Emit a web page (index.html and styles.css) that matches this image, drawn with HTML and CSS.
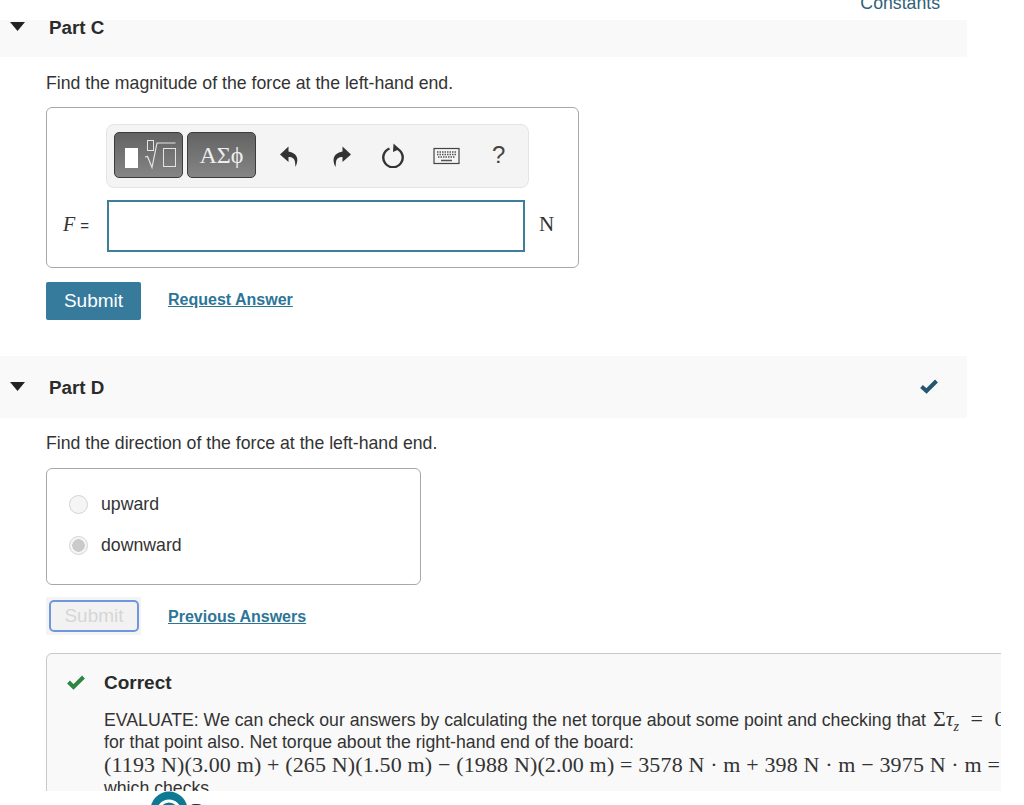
FILE: index.html
```html
<!DOCTYPE html>
<html lang="en">
<head>
<meta charset="utf-8">
<title>Part C and Part D</title>
<link rel="stylesheet" href="styles.css">
</head>
<body>
<div class="viewport">
  <div class="scroller">
    <div class="constants-row"><a class="constants">Constants</a></div>

    <div class="part-head head-c">
      <svg class="caret" width="15" height="9" viewBox="0 0 15 9"><path d="M0 0H15L7.500 9Z"/></svg>
      <h2 class="part-title title-c">Part C</h2>
    </div>
    <div class="part-body">
      <p class="prompt prompt-c">Find the magnitude of the force at the left-hand end.</p>
      <div class="answer-box">
        <div class="toolbar">
          <button class="tool-btn tool-template" aria-label="Templates">
            <svg width="67" height="44" viewBox="0 0 67 44">
              <rect x="10" y="15" width="13" height="20" fill="#fff"/>
              <rect x="32.500" y="7.500" width="6" height="10" fill="none" stroke="#e4e4e4"/>
              <path d="M30 24l2.500-.5 4.500 11 5-24.500H60.500" fill="none" stroke="#e4e4e4" stroke-width="1.200"/>
              <rect x="48.500" y="15.500" width="12" height="18" fill="none" stroke="#e4e4e4"/>
            </svg>
          </button>
          <button class="tool-btn tool-greek">ΑΣϕ</button>
          <span class="tool-icons">
            <svg class="icon-undo" width="20" height="23" viewBox="0 0 20 23"><path d="M9.500 1.500 1 9.500 9.500 17v-5c4 0 6 1.500 6.500 5l.5 5c3-6 3.500-13.500-7-15.500Z" fill="#333"/></svg>
            <svg class="icon-redo" width="20" height="23" viewBox="0 0 20 23"><path d="M10.500 1.500 19 9.500 10.500 17v-5c-4 0-6 1.500-6.500 5l-.5 5c-3-6-3.500-13.500 7-15.500Z" fill="#333"/></svg>
            <svg class="icon-reset" width="24" height="26" viewBox="0 0 24 26"><path d="M15.500 6.500a9.700 9.700 0 1 1-7 0" fill="none" stroke="#333" stroke-width="2.400"/><path d="M12.500 1.500l6 5.500-6.500 3Z" fill="#333"/></svg>
            <svg class="icon-keys" width="27" height="18" viewBox="0 0 27 18"><rect x="1" y="1.500" width="25" height="15" fill="#f4f4f4" stroke="#444" stroke-width="1.200"/><path d="M4 5h19M4 7.500h19M5 10h17" stroke="#555" stroke-width="1.300" stroke-dasharray="1.500 1"/><path d="M8 13.500h11" stroke="#555" stroke-width="1.500"/></svg>
            <span class="icon-help">?</span>
          </span>
        </div>
        <div class="input-row">
          <span class="math var-label"><i>F</i> <span class="eq">=</span></span>
          <div class="text-input"></div>
          <span class="math unit">N</span>
        </div>
      </div>
      <div class="actions actions-c">
        <button class="submit">Submit</button>
        <a class="action-link">Request Answer</a>
      </div>
    </div>

    <div class="part-head head-d">
      <svg class="caret" width="15" height="9" viewBox="0 0 15 9"><path d="M0 0H15L7.500 9Z"/></svg>
      <h2 class="part-title">Part D</h2>
      <svg class="done-check" width="20" height="16" viewBox="0 0 20 16"><path d="M2.500 8.500 7.500 13 17.500 3" fill="none" stroke="#24566e" stroke-width="4"/></svg>
    </div>
    <div class="part-body">
      <p class="prompt prompt-d">Find the direction of the force at the left-hand end.</p>
      <div class="choice-box">
        <div class="choice"><span class="radio"></span><span>upward</span></div>
        <div class="choice"><span class="radio radio-on"></span><span>downward</span></div>
      </div>
      <div class="actions actions-d">
        <span class="submit-halo"><button class="submit-off">Submit</button></span>
        <a class="action-link">Previous Answers</a>
      </div>
      <div class="result">
        <svg class="result-check" width="20" height="16" viewBox="0 0 20 16"><path d="M2.500 8 7.500 13 17.500 3" fill="none" stroke="#2f8542" stroke-width="4"/></svg>
        <div class="result-text">
          <h3 class="result-title">Correct</h3>
          <div class="result-line">EVALUATE: We can check our answers by calculating the net torque about some point and checking that <span class="math eval-math">Σ<i>τ<sub>z</sub></i> = 0</span></div>
          <div class="result-line">for that point also. Net torque about the right-hand end of the board:</div>
          <div class="result-line math calc">(1193 N)(3.00 m) + (265 N)(1.50 m) − (1988 N)(2.00 m) = 3578 N · m + 398 N · m − 3975 N · m = 0</div>
          <div class="result-line">which checks.</div>
        </div>
      </div>
    </div>
  </div>
  <div class="footer">
    <svg class="logo" width="38" height="38" viewBox="0 0 38 38"><circle cx="19" cy="19" r="18.500" fill="#0d7a93"/><circle cx="19" cy="21" r="11" fill="none" stroke="#fff" stroke-width="3"/></svg>
    <span class="brand">Pearson</span>
  </div>
</div>
</body>
</html>
```

FILE: styles.css
```css
* { box-sizing: border-box; }
html, body { margin: 0; padding: 0; background: #fff; }
body {
  font-family: "Liberation Sans", Arial, sans-serif;
  color: #333;
  font-size: 17.700px;
}
.viewport { width: 1024px; height: 805px; overflow: hidden; }
.scroller { width: 1001px; height: 791px; overflow: hidden; }

.constants-row {
  height: 20px;
  width: 940px;
  display: flex;
  justify-content: flex-end;
  align-items: flex-end;
  overflow: hidden;
}
.constants { color: #2f6178; font-size: 17.700px; line-height: 18px; margin-bottom: 8px; }

.part-head {
  width: 967px;
  background: #f9f9f9;
  display: flex;
  align-items: center;
  position: relative;
}
.head-c { height: 37px; align-items: flex-start; }
.head-d { height: 62px; margin-top: 36px; }
.caret { fill: #222; margin-left: 10px; flex: none; }
.head-c .caret { margin-top: 2px; }
.head-d .caret { margin-top: -2px; }
.part-title { margin: 0 0 0 24px; font-size: 18.800px; font-weight: 700; color: #2b2b2b; line-height: 20px; }
.head-d .part-title { margin-top: 1px; }
.title-c { margin-top: -2px; }
.done-check { position: absolute; left: 919px; top: 22px; }

.part-body { padding-left: 46px; }
.prompt { margin: 0; font-size: 17.700px; line-height: 20px; }
.prompt-c { padding-top: 16px; }
.prompt-d { padding-top: 15px; }

.answer-box {
  width: 533px;
  height: 161px;
  margin-top: 14px;
  border: 1px solid #a8a8a8;
  border-radius: 6px;
  padding: 16px 0 0 59px;
}
.toolbar {
  width: 423px;
  height: 64px;
  background: #f4f4f4;
  border: 1px solid #e4e4e4;
  border-radius: 8px;
  display: flex;
  align-items: flex-start;
  gap: 4px;
  padding: 7px 0 0 7px;
}
.tool-btn {
  width: 69px;
  height: 46px;
  padding: 0;
  border: 1px solid #3c3c3c;
  border-radius: 5px;
  background: linear-gradient(#636363, #858585);
  display: flex;
  align-items: center;
  justify-content: center;
  color: #eee;
  font-family: "Liberation Serif", serif;
}
.tool-greek { font-size: 24px; }
.tool-icons { display: flex; align-items: center; height: 46px; position: relative; flex: 1; }
.icon-undo { margin-left: 19px; margin-top: 2px; }
.icon-redo { margin-left: 33px; margin-top: 2px; }
.icon-reset { margin-left: 29px; }
.icon-keys { margin-left: 28px; margin-top: 2px; }
.icon-help { margin-left: 32px; font-size: 24px; font-family: "Liberation Sans", sans-serif; color: #444; line-height: 26px; }

.input-row { display: flex; align-items: center; margin-top: 12px; margin-left: -43px; height: 52px; }
.math { font-family: "Liberation Serif", "DejaVu Serif", serif; }
.var-label { width: 44px; font-size: 20px; white-space: nowrap; margin-top: -3px; }
.eq { font-size: 15px; font-family: "Liberation Sans", sans-serif; }
.text-input { width: 418px; height: 52px; border: 2px solid #3d7e9d; background: #fff; flex: none; }
.unit { margin-left: 14px; font-size: 21px; margin-top: -3px; }

.actions { display: flex; align-items: center; }
.actions-c { margin-top: 14px; height: 38px; }
.actions-d { margin-top: 12px; height: 38px; }
.submit {
  width: 95px;
  height: 38px;
  border: 0;
  border-radius: 2px;
  background: #367a9c;
  color: #fff;
  font: 19px "Liberation Sans", sans-serif;
  padding: 0;
}
.action-link {
  color: #2d7597;
  font-weight: 700;
  font-size: 16px;
  text-decoration: underline;
  margin-left: 27px;
  margin-top: -3px;
}
.actions-d .action-link { margin-top: 1px; }
.submit-halo {
  width: 95px;
  height: 38px;
  background: #f4f4f4;
  padding: 3px;
  display: block;
}
.submit-off {
  width: 90px;
  height: 32px;
  border: 2px solid #7097dc;
  border-radius: 5px;
  background: #f2f2f2;
  color: #d6d6d6;
  font: 19px "Liberation Sans", sans-serif;
  padding: 0;
  display: block;
}

.choice-box {
  width: 375px;
  height: 117px;
  margin-top: 15px;
  border: 1px solid #a8a8a8;
  border-radius: 6px;
  padding: 25px 0 0 22px;
  display: flex;
  flex-direction: column;
  gap: 21px;
}
.choice { display: flex; align-items: center; gap: 13px; height: 20px; font-size: 17.700px; }
.radio { width: 19px; height: 19px; border-radius: 50%; border: 1px solid #d4d4d4; background: #f5f5f5; flex: none; }
.radio-on { background: radial-gradient(circle, #cacaca 0 6px, #f5f5f5 6.500px); }

.result {
  width: 1100px;
  height: 150px;
  margin-top: 18px;
  background: #f9f9f9;
  border: 1px solid #c8c8c8;
  border-radius: 6px;
  display: flex;
  padding: 18px 0 0 19px;
}
.result-check { flex: none; margin-top: 2px; }
.result-text { margin-left: 18px; white-space: nowrap; }
.result-title { margin: 0 0 15px; font-size: 19px; line-height: 22px; font-weight: 700; color: #2b2b2b; }
.result-line { font-size: 17.700px; line-height: 22px; }
.result-line:last-child { margin-top: 1px; }
.result-text .calc { font-size: 22px; letter-spacing: 0.150px; margin-top: 1px; }
.eval-math { font-size: 22px; line-height: 0; word-spacing: 6px; margin-left: 2px; }
sub { font-size: 14px; line-height: 0; }

.footer { position: relative; height: 14px; display: flex; overflow: hidden; }
.logo { margin-left: 150px; flex: none; }
.brand { margin-left: 3px; font: 22px/30px "Liberation Serif", serif; color: #333; padding-top: 5px; }
```
